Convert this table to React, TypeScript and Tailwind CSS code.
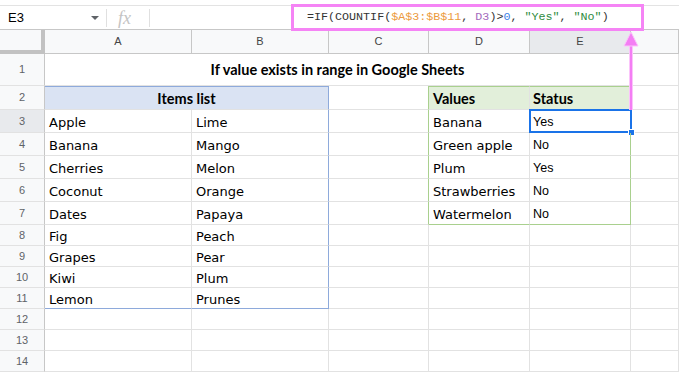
import React from 'react';

const items: [string, string][] = [
    ['Apple', 'Lime'],
    ['Banana', 'Mango'],
    ['Cherries', 'Melon'],
    ['Coconut', 'Orange'],
    ['Dates', 'Papaya'],
    ['Fig', 'Peach'],
    ['Grapes', 'Pear'],
    ['Kiwi', 'Plum'],
    ['Lemon', 'Prunes'],
];

const values: [string, string][] = [
    ['Banana', 'Yes'],
    ['Green apple', 'No'],
    ['Plum', 'Yes'],
    ['Strawberries', 'No'],
    ['Watermelon', 'No'],
];

const body = "font-['DejaVu_Sans',sans-serif] text-[13px] text-black pt-[3px]";
const bold = "font-['Lato',sans-serif] font-bold text-[14.5px] text-black";
const label = "font-['Liberation_Sans',Arial,sans-serif] text-[11px] text-[#5f6368]";

const FormulaBar: React.FC = () => (
    <div className="mt-[5px] h-[25px] border-t border-t-[#e3e3e3] border-b border-b-[#c7c7c7] flex items-center bg-white relative">
        <span className="font-['Liberation_Sans',Arial,sans-serif] text-[13px] text-black ml-[8px] w-[80px]">E3</span>
        <svg width="8" height="4" viewBox="0 0 8 4" className="ml-[3px]">
            <path d="M0 0 L8 0 L4 4 Z" fill="#5f6368" />
        </svg>
        <div className="w-px h-[18px] bg-[#e0e0e0] ml-[7px]" />
        <span className="font-['Liberation_Serif',serif] italic text-[18px] text-[#c4c4c4] ml-[11px] w-[31px] leading-none">fx</span>
        <div className="w-px h-[18px] bg-[#e0e0e0]" />
        <div className="absolute left-[291px] top-[-2px] w-[353px] h-[27px] border-[3px] border-[#f584f5] flex items-center pl-[13px]">
            <span className="font-['Liberation_Mono',monospace] text-[11.7px] text-[#333] whitespace-pre">
                =IF(COUNTIF(<span className="text-[#ec9a3c]">$A$3:$B$11</span>, <span className="text-[#a36bbd]">D3</span>)&gt;<span className="text-[#3b82e8]">0</span>, <span className="text-[#2e8b3e]">"Yes"</span>, <span className="text-[#2e8b3e]">"No"</span>)
            </span>
        </div>
    </div>
);

const App: React.FC = () => {
    const colHead = `${label} text-[#444] flex items-center justify-center border-r border-b border-[#c7c7c7]`;
    const grid = 'border-r border-b border-r-[#e2e2e2] border-b-[#e2e2e2]';
    const rowHead = (n: number, active = false) => (
        <div key={`h${n}`} className={`${label} flex items-center justify-center border-r border-b border-r-[#c7c7c7] border-b-[#e2e2e2] ${active ? 'bg-[#e8eaed]' : 'bg-[#f8f9fa]'}`}>{n}</div>
    );

    const rows: React.ReactNode[] = [];
    for (let i = 0; i < 12; i++) {
        const r = i + 3;
        const item = items[i];
        const val = values[i];
        const lastItem = r === 11;
        const lastVal = r === 7;
        rows.push(rowHead(r, r === 3));
        rows.push(
            <div key={`a${r}`} className={`${body} pl-[4px] flex items-center border-r border-b border-r-[#e2e2e2] ${lastItem ? 'border-b-[#8eaadb]' : 'border-b-[#e2e2e2]'}`}>{item?.[0]}</div>
        );
        rows.push(
            <div key={`b${r}`} className={`${body} pl-[4px] flex items-center border-r border-b ${item ? 'border-r-[#8eaadb]' : 'border-r-[#e2e2e2]'} ${lastItem ? 'border-b-[#8eaadb]' : 'border-b-[#e2e2e2]'}`}>{item?.[1]}</div>
        );
        rows.push(
            <div key={`c${r}`} className={`border-r border-b border-b-[#e2e2e2] ${val ? 'border-r-[#a9d08e]' : 'border-r-[#e2e2e2]'}`} />
        );
        rows.push(
            <div key={`d${r}`} className={`${body} pl-[4px] flex items-center border-r border-b border-r-[#e2e2e2] ${lastVal ? 'border-b-[#a9d08e]' : 'border-b-[#e2e2e2]'}`}>{val?.[0]}</div>
        );
        rows.push(
            <div key={`e${r}`} className={`relative font-['Liberation_Sans',Arial,sans-serif] text-[12.5px] text-black pl-[3px] pt-[2px] flex items-center border-r border-b ${val ? 'border-r-[#a9d08e]' : 'border-r-[#e2e2e2]'} ${lastVal ? 'border-b-[#a9d08e]' : 'border-b-[#e2e2e2]'}`}>
                {val?.[1]}
                {r === 3 && (
                    <>
                        <div className="absolute left-[-1px] top-[-1px] right-[-2px] bottom-[-1px] border-2 border-[#1a73e8]" />
                        <div className="absolute right-[-5px] bottom-[-4px] w-[7px] h-[7px] bg-[#1a73e8] border border-white" />
                    </>
                )}
            </div>
        );
        rows.push(<div key={`f${r}`} className={grid} />);
    }

    return (
        <div className="w-[679px] h-[373px] bg-white overflow-hidden relative">
            <FormulaBar />
            <div className="grid grid-cols-[45px_147px_137px_100px_101px_101px_1fr] grid-rows-[24px_32px_24px_23px_23px_23px_23px_23px_21px_21px_21px_21px_21px_21px_21px]">
                {/* column headers */}
                <div className="bg-[#f8f9fa] border-r-4 border-b-4 border-[#c2c2c2]" />
                <div className={`${colHead} bg-[#f8f9fa]`}>A</div>
                <div className={`${colHead} bg-[#f8f9fa]`}>B</div>
                <div className={`${colHead} bg-[#f8f9fa]`}>C</div>
                <div className={`${colHead} bg-[#f8f9fa]`}>D</div>
                <div className={`${colHead} bg-[#e8eaed]`}>E</div>
                <div className={`${colHead} bg-[#f8f9fa]`} />

                {/* row 1 */}
                {rowHead(1)}
                <div className={`col-span-5 ${bold} pt-[1px] flex items-center justify-center ${grid}`}>If value exists in range in Google Sheets</div>
                <div className={grid} />

                {/* row 2 */}
                {rowHead(2)}
                <div className={`col-span-2 ${bold} pt-[1px] bg-[#dae3f3] flex items-center justify-center border-t border-r border-b border-[#8eaadb] border-b-[#e2e2e2]`}>Items list</div>
                <div className="border-b border-b-[#e2e2e2] border-r border-r-[#a9d08e]" />
                <div className={`${bold} pt-[1px] bg-[#e2efda] pl-[4px] flex items-center border-t border-t-[#a9d08e] border-r border-r-[#e2e2e2] border-b border-b-[#e2e2e2]`}>Values</div>
                <div className={`${bold} pt-[1px] bg-[#e2efda] pl-[3px] flex items-center border-t border-t-[#a9d08e] border-r border-r-[#a9d08e] border-b border-b-[#e2e2e2]`}>Status</div>
                <div className={grid} />

                {rows}
            </div>

            {/* arrow from formula to the selected cell */}
            <svg className="absolute left-[620px] top-[30px]" width="22" height="82" viewBox="0 0 22 82">
                <line x1="11" y1="10" x2="11" y2="80" stroke="#fbc4fb" strokeWidth="4" />
                <line x1="11" y1="10" x2="11" y2="80" stroke="#f47ef4" strokeWidth="2" />
                <path d="M11 2 L18 16 L4 16 Z" fill="#f47ef4" stroke="#fbc4fb" strokeWidth="1" />
            </svg>
        </div>
    );
};

export default App;
